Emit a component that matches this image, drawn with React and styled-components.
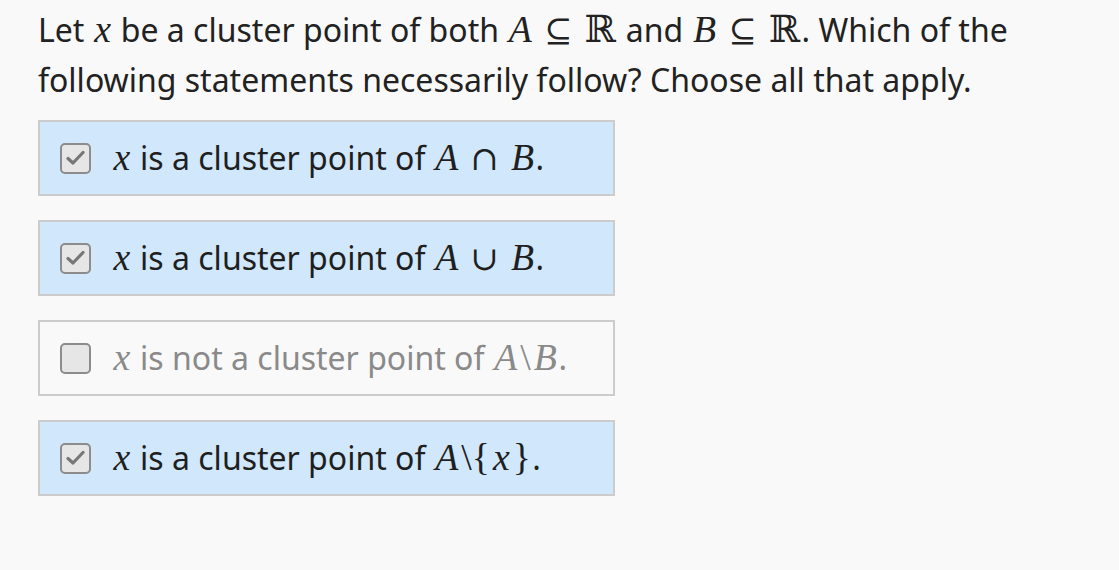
import React from 'react';
import styled, { createGlobalStyle } from 'styled-components';

const GlobalStyle = createGlobalStyle`
  html, body {
    margin: 0;
    padding: 0;
    background: #f9f9f9;
  }
  body {
    font-family: "Noto Sans", "Open Sans", sans-serif;
    color: #222;
  }
`;

const Page = styled.div`
  padding: 5px 38px 0 38px;
  min-height: 570px;
  box-sizing: border-box;
`;

const Question = styled.p`
  margin: 0 0 15px 0;
  font-size: 32px;
  line-height: 50px;
  color: #222;
  width: 1020px;
`;

const Options = styled.div`
  display: flex;
  flex-direction: column;
  gap: 24px;
  width: 577px;
`;

const Option = styled.label`
  display: flex;
  align-items: center;
  gap: 21px;
  height: 76px;
  box-sizing: border-box;
  padding-left: 20px;
  border: 2px solid #cccccc;
  background: ${(p) => (p.$checked ? '#d1e7fc' : '#f9f9f9')};
  color: ${(p) => (p.$checked ? '#1f1f1f' : '#8a8a8a')};
  font-size: 32px;
  cursor: pointer;
`;

const Box = styled.span`
  width: 31px;
  height: 31px;
  box-sizing: border-box;
  border: 2px solid #8c8c8c;
  border-radius: 5px;
  background: #e6e6e6;
  display: flex;
  align-items: center;
  justify-content: center;
  flex-shrink: 0;
`;

const Label = styled.span`
  white-space: nowrap;
  position: relative;
  top: -1px;
`;

const M = styled.span`
  font-family: "Liberation Serif", "DejaVu Serif", serif;
  font-style: ${(p) => (p.$up ? 'normal' : 'italic')};
  font-size: 1.18em;
  line-height: 1;
  padding: 0 0.04em;
`;

const Op = styled.span`
  font-family: "DejaVu Serif", "Liberation Serif", serif;
  font-size: 1.05em;
  margin: 0 0.32em;
  line-height: 1;
`;

const Check = () => (
  <svg width="19" height="16" viewBox="0 0 19 16">
    <path d="M2 8.5 L7 13 L17 2.5" fill="none" stroke="#777" strokeWidth="3.2" strokeLinecap="round" strokeLinejoin="round" />
  </svg>
);

function Choice({ checked, children }) {
  return (
    <Option $checked={checked}>
      <Box>{checked && <Check />}</Box>
      <Label>{children}</Label>
    </Option>
  );
}

export default function App() {
  return (
    <>
      <GlobalStyle />
      <Page>
        <Question>
          Let <M>x</M> be a cluster point of both <M>A</M>
          <Op>⊆</Op>
          <M $up>ℝ</M> and <M>B</M>
          <Op>⊆</Op>
          <M $up>ℝ</M>. Which of the following statements necessarily follow? Choose all that apply.
        </Question>
        <Options>
          <Choice checked>
            <M>x</M> is a cluster point of <M>A</M>
            <Op>∩</Op>
            <M>B</M>.
          </Choice>
          <Choice checked>
            <M>x</M> is a cluster point of <M>A</M>
            <Op>∪</Op>
            <M>B</M>.
          </Choice>
          <Choice>
            <M>x</M> is not a cluster point of <M>A</M>
            <M $up>{'\\'}</M>
            <M>B</M>.
          </Choice>
          <Choice checked>
            <M>x</M> is a cluster point of <M>A</M>
            <M $up>{'\\{'}</M>
            <M>x</M>
            <M $up>{'}'}</M>.
          </Choice>
        </Options>
      </Page>
    </>
  );
}
